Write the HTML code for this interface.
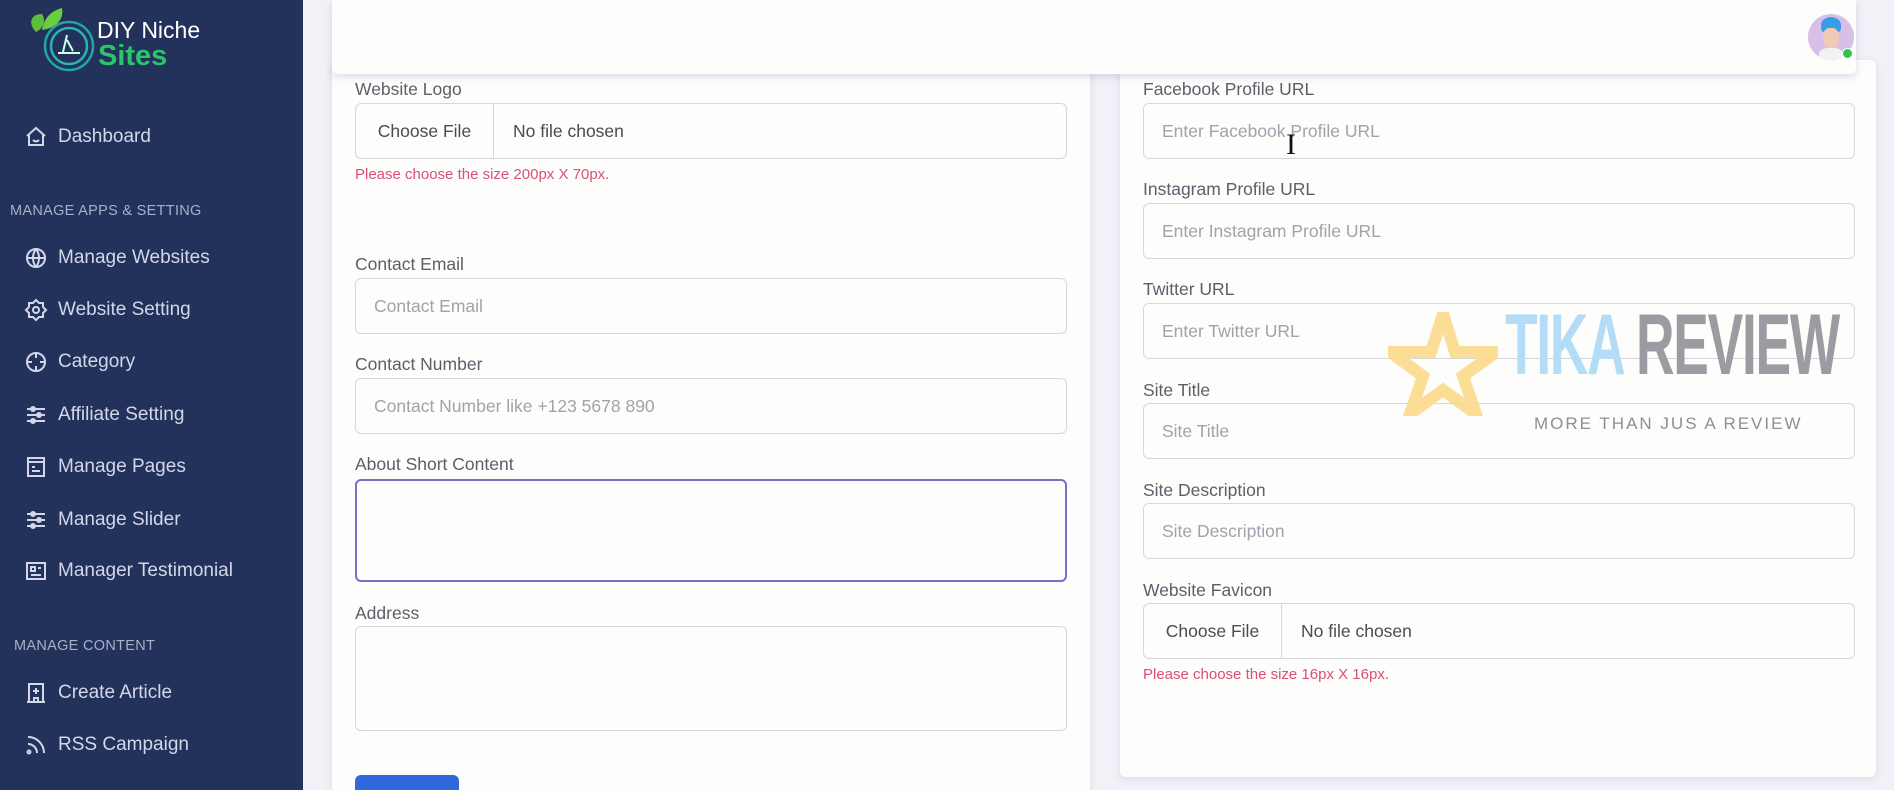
<!DOCTYPE html>
<html><head><meta charset="utf-8"><style>
*{box-sizing:border-box;margin:0;padding:0}
html{width:1894px;height:790px;overflow:hidden}
body{width:1894px;height:790px;overflow:hidden;background:#f3f1f7;font-family:"Liberation Sans",sans-serif;position:relative}
.sb{position:absolute;left:0;top:0;width:303px;height:790px;background:#22325a}
.it{position:absolute;left:24px;color:#d4d7ea;font-size:19px;display:flex;align-items:center}
.it svg{width:24px;height:24px;margin-right:10px;stroke:#d4d7ea;fill:none;stroke-width:2}
.sec{position:absolute;left:10px;color:#a9afc8;font-size:14.5px;letter-spacing:.3px}
.card{position:absolute;background:#fdfdfb;border-radius:6px;box-shadow:0 2px 8px rgba(120,100,170,.18)}
.lb{position:absolute;color:#5e5d6a;font-size:17.5px}
.in{position:absolute;border:1px solid #d8d5e0;border-radius:6px;background:#fdfdfb;color:#a3a1ac;font-size:17.5px;padding-left:18px;display:flex;align-items:center}
.file{padding-left:0;color:#4b4a55}
.file .cf{width:138px;height:100%;border-right:1px solid #d8d5e0;display:flex;align-items:center;justify-content:center}
.file .nf{padding-left:19px}
.err{position:absolute;color:#d9507a;font-size:15px}
</style></head><body>
<div class="sb">
  <svg style="position:absolute;left:22px;top:2px" width="74" height="74" viewBox="0 0 74 74">
    <path d="M14 30 C6 22 8 12 20 12 C24 18 22 26 14 30Z" fill="#5bbf3a"/>
    <path d="M20 28 C22 14 32 8 40 6 C42 18 34 26 20 28Z" fill="#6ccc3f"/>
    <circle cx="47" cy="44" r="24" fill="none" stroke="#27a3a0" stroke-width="2.5"/>
    <circle cx="47" cy="44" r="18" fill="none" stroke="#2ab4b0" stroke-width="2.5"/>
    <path d="M45 33 l-4 17 M45 38 l6 11 M36 51 h22" stroke="#cfe" stroke-width="2" fill="none"/>
  </svg>
  <div style="position:absolute;left:97px;top:17px;color:#fff;font-size:23px">DIY Niche</div>
  <div style="position:absolute;left:98px;top:40px;color:#2cc46b;font-size:29px;font-weight:bold">Sites</div>

  <div class="it" style="top:125px"><svg viewBox="0 0 24 24"><path d="M3 11 L12 3 L21 11 M5 10 V20 H19 V10 M9 15 q3 3 6 0"/></svg>Dashboard</div>
  <div class="sec" style="top:203px">MANAGE APPS &amp; SETTING</div>
  <div class="it" style="top:246px"><svg viewBox="0 0 24 24"><circle cx="12" cy="12" r="9"/><path d="M3 12h18M12 3c-4 5-4 13 0 18M12 3c4 5 4 13 0 18"/></svg>Manage Websites</div>
  <div class="it" style="top:298px"><svg viewBox="0 0 24 24"><path d="M12 2l3 3h4v4l3 3-3 3v4h-4l-3 3-3-3H5v-4l-3-3 3-3V5h4z"/><circle cx="12" cy="12" r="3"/></svg>Website Setting</div>
  <div class="it" style="top:350px"><svg viewBox="0 0 24 24"><circle cx="12" cy="12" r="9"/><path d="M12 3v5M12 16v5M3 12h5M16 12h5"/></svg>Category</div>
  <div class="it" style="top:403px"><svg viewBox="0 0 24 24"><path d="M3 6h18M3 12h18M3 18h18"/><circle cx="9" cy="6" r="2"/><circle cx="15" cy="12" r="2"/><circle cx="9" cy="18" r="2"/></svg>Affiliate Setting</div>
  <div class="it" style="top:455px"><svg viewBox="0 0 24 24"><rect x="4" y="3" width="16" height="18"/><path d="M4 7h16M8 12h3M8 16h8"/></svg>Manage Pages</div>
  <div class="it" style="top:508px"><svg viewBox="0 0 24 24"><path d="M3 6h18M3 12h18M3 18h18"/><circle cx="9" cy="6" r="2"/><circle cx="15" cy="12" r="2"/><circle cx="9" cy="18" r="2"/></svg>Manage Slider</div>
  <div class="it" style="top:559px"><svg viewBox="0 0 24 24"><rect x="3" y="4" width="18" height="16"/><path d="M7 8h4v4H7zM14 9h3M7 16h10"/></svg>Manager Testimonial</div>
  <div class="sec" style="top:638px;left:14px">MANAGE CONTENT</div>
  <div class="it" style="top:681px"><svg viewBox="0 0 24 24"><path d="M5 3h14v18H5zM3 21h18M12 7v6M9 10h6M10 21v-4h4v4"/></svg>Create Article</div>
  <div class="it" style="top:733px"><svg viewBox="0 0 24 24"><path d="M4 4a16 16 0 0 1 16 16M4 11a9 9 0 0 1 9 9"/><circle cx="5" cy="19" r="1.5"/></svg>RSS Campaign</div>
</div>

<div class="card" style="left:332px;top:60px;width:758px;height:740px"></div>
<div class="card" style="left:1120px;top:60px;width:756px;height:717px"></div>
<div class="card" style="left:332px;top:0;width:1524px;height:74px;border-radius:0 0 6px 6px;box-shadow:0 3px 8px rgba(120,100,170,.22)"></div>
<div style="position:absolute;left:1808px;top:14px;width:46px;height:46px;border-radius:50%;background:#d7bfe8;overflow:hidden">
  <div style="position:absolute;left:13px;top:3px;width:20px;height:16px;border-radius:50% 50% 30% 30%;background:#3a9be6"></div>
  <div style="position:absolute;left:15px;top:14px;width:16px;height:20px;border-radius:40%;background:#f2c9b4"></div>
  <div style="position:absolute;left:11px;top:34px;width:24px;height:14px;border-radius:40%;background:#f2f2f2"></div>
</div>
<div style="position:absolute;left:1842px;top:48px;width:11px;height:11px;border-radius:50%;background:#2fc44c;border:1.5px solid #fff"></div>

<div class="lb" style="left:355px;top:79px">Website Logo</div>
<div class="in file" style="left:355px;top:103px;width:712px;height:56px"><div class="cf">Choose File</div><div class="nf">No file chosen</div></div>
<div class="err" style="left:355px;top:166px">Please choose the size 200px X 70px.</div>
<div class="lb" style="left:355px;top:254px">Contact Email</div>
<div class="in" style="left:355px;top:278px;width:712px;height:56px">Contact Email</div>
<div class="lb" style="left:355px;top:354px">Contact Number</div>
<div class="in" style="left:355px;top:378px;width:712px;height:56px">Contact Number like +123 5678 890</div>
<div class="lb" style="left:355px;top:454px">About Short Content</div>
<div class="in" style="left:355px;top:479px;width:712px;height:103px;border:2px solid #7b6cc4"></div>
<div class="lb" style="left:355px;top:603px">Address</div>
<div class="in" style="left:355px;top:626px;width:712px;height:105px"></div>
<div style="position:absolute;left:355px;top:775px;width:104px;height:30px;background:#3169dc;border-radius:6px"></div>

<div class="lb" style="left:1143px;top:79px">Facebook Profile URL</div>
<div class="in" style="left:1143px;top:103px;width:712px;height:56px">Enter Facebook Profile URL</div>
<div class="lb" style="left:1143px;top:179px">Instagram Profile URL</div>
<div class="in" style="left:1143px;top:203px;width:712px;height:56px">Enter Instagram Profile URL</div>
<div class="lb" style="left:1143px;top:279px">Twitter URL</div>
<div class="in" style="left:1143px;top:303px;width:712px;height:56px">Enter Twitter URL</div>
<div class="lb" style="left:1143px;top:380px">Site Title</div>
<div class="in" style="left:1143px;top:403px;width:712px;height:56px">Site Title</div>
<div class="lb" style="left:1143px;top:480px">Site Description</div>
<div class="in" style="left:1143px;top:503px;width:712px;height:56px">Site Description</div>
<div class="lb" style="left:1143px;top:580px">Website Favicon</div>
<div class="in file" style="left:1143px;top:603px;width:712px;height:56px"><div class="cf">Choose File</div><div class="nf">No file chosen</div></div>
<div class="err" style="left:1143px;top:666px">Please choose the size 16px X 16px.</div>

<svg style="position:absolute;left:1388px;top:312px" width="110" height="104" viewBox="0 0 110 104"><path d="M55 2 L67 40 L108 40 L75 64 L88 102 L55 78 L22 102 L35 64 L2 40 L43 40 Z" fill="none" stroke="#fbd98a" stroke-width="12" opacity=".9"/></svg>
<div style="position:absolute;left:1505px;top:302px;font-size:86px;font-weight:bold;letter-spacing:-2px;transform:scaleX(.62);transform-origin:left top;white-space:nowrap;line-height:1"><span style="color:#b3dcf7">TIKA</span> <span style="color:#9c9ba1">REVIEW</span></div>
<div style="position:absolute;left:1534px;top:414px;font-size:17px;letter-spacing:2px;color:#8f8e96">MORE THAN JUS A REVIEW</div>
<div style="position:absolute;left:1286px;top:128px;font-size:30px;color:#111;font-family:'Liberation Serif',serif">I</div>
</body></html>
